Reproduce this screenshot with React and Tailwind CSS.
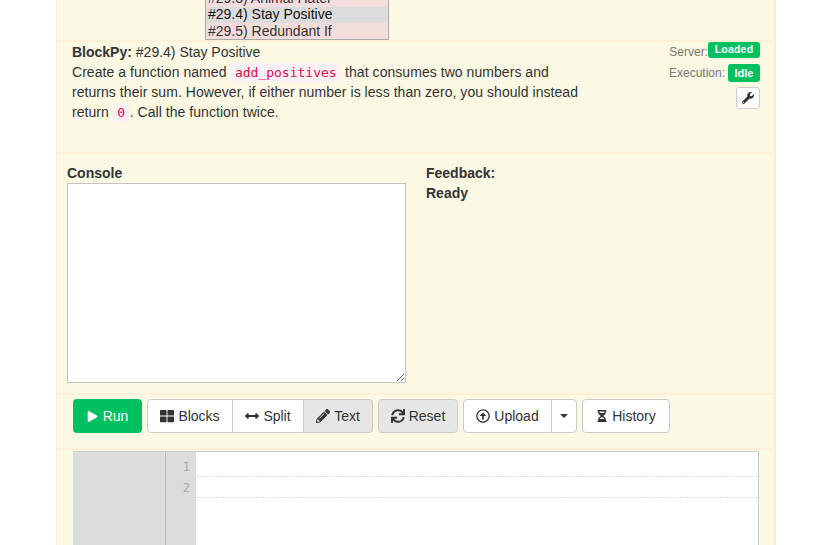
import React from 'react';
import { FaPlay, FaThLarge, FaArrowsAltH, FaPencilAlt, FaSync, FaRegArrowAltCircleUp, FaHourglassHalf, FaWrench } from 'react-icons/fa';

const Code = ({ children }) => (
  <code className="mx-[0.5px] px-[4px] py-[2px] rounded-[4px] bg-[#fbf0f4] text-[#e0064f] text-[13px] leading-[16px] tracking-normal font-['DejaVu_Sans_Mono',monospace]">{children}</code>
);

const Btn = ({ className = '', children }) => (
  <button className={`h-[34px] flex items-center gap-[4px] border border-[#ccc] text-[#333] text-[14px] ${className}`}>{children}</button>
);

const App = () => {
  return (
    <div className="h-[545px] w-[821px] overflow-hidden bg-white font-['Liberation_Sans',sans-serif] text-[14px] leading-[20px] text-[#333]">
      <div className="ml-[56px] w-[720px] h-[545px] bg-[#fbf8e3] border-l border-r-2 border-[#fdeccd]">
        {/* problem picker, scrolled off the top */}
        <div className="h-[42px] border-b-2 border-[#fdf0d6] flex items-end pl-[148px]">
          <div className="w-[184px] border border-[#aaa] border-t-0 text-[14px] leading-[16px]">
            <div className="h-[17px] px-[2px] bg-[#f3dcdc] text-[#333] whitespace-nowrap">#29.3) Animal Hater</div>
            <div className="h-[16px] px-[2px] bg-[#dcdcdc] text-[#111] leading-[15px]">#29.4) Stay Positive</div>
            <div className="h-[16px] px-[2px] bg-[#f3dcdc] text-[#333]">#29.5) Redundant If</div>
          </div>
        </div>

        {/* description */}
        <div className="h-[112px] border-b-2 border-[#fdf0d6] flex justify-between pl-[15px] pr-[14px]">
          <div className="w-[510px]">
            <div><b>BlockPy:</b> #29.4) Stay Positive</div>
            <div className="tracking-[0.05px]">Create a function named <Code>add_positives</Code> that consumes two numbers and returns their sum. However, if either number is less than zero, you should instead return <Code>0</Code>. Call the function twice.</div>
          </div>
          <div className="flex flex-col items-end text-[12px] text-[#777]">
            <div className="flex items-start h-[21px]">
              <span className="pt-[1px] leading-[18px]">Server:</span>
              <span className="h-[16px] w-[52px] text-center rounded-[3px] bg-[#00c060] text-white text-[10.5px] leading-[15px] font-bold tracking-[0.2px]">Loaded</span>
            </div>
            <div className="flex items-start h-[25px]">
              <span className="pt-[1px] leading-[18px]">Execution:</span>
              <span className="ml-[3px] mt-[1px] h-[18px] w-[32px] text-center rounded-[3px] bg-[#00c060] text-white text-[11px] leading-[18px] font-bold">Idle</span>
            </div>
            <button className="mt-[-1px] w-[24px] h-[22px] flex items-center justify-center bg-white border border-[#ccc] rounded-[3px] text-[#333]">
              <FaWrench size={12} />
            </button>
          </div>
        </div>

        {/* console and feedback */}
        <div className="h-[241px] border-b-2 border-[#fdf0d6] flex pl-[10px]">
          <div className="w-[359px]">
            <div className="font-bold h-[20px] mt-[9px]">Console</div>
            <textarea readOnly className="block w-[339px] h-[200px] bg-white border border-[#c4c4c4] outline-none resize-y" />
          </div>
          <div className="pt-[9px] font-bold">
            <div>Feedback:</div>
            <div>Ready</div>
          </div>
        </div>

        {/* toolbar */}
        <div className="h-[55px] border-b-2 border-[#fdf0d6] flex items-start pt-[4px] pl-[16px]">
          <button className="h-[34px] w-[69px] flex items-center justify-center gap-[5px] rounded-[4px] bg-[#00c060] text-white text-[14px]">
            <FaPlay size={11} /> Run
          </button>
          <div className="flex ml-[5px]">
            <Btn className="w-[86px] justify-center rounded-l-[4px] bg-white"><FaThLarge size={14} /> Blocks</Btn>
            <Btn className="w-[72px] justify-center -ml-[1px] bg-white"><FaArrowsAltH size={14} /> Split</Btn>
            <Btn className="w-[70px] justify-center -ml-[1px] rounded-r-[4px] bg-[#e6e6e6] border-[#adadad]"><FaPencilAlt size={14} /> Text</Btn>
          </div>
          <Btn className="w-[80px] ml-[5px] justify-center rounded-[4px] bg-[#e6e6e6] border-[#adadad]"><FaSync size={14} /> Reset</Btn>
          <div className="flex ml-[5px]">
            <Btn className="w-[89px] justify-center rounded-l-[4px] bg-white"><FaRegArrowAltCircleUp size={14} /> Upload</Btn>
            <Btn className="w-[26px] justify-center -ml-[1px] rounded-r-[4px] bg-white">
              <span className="border-x-[4px] border-t-[4px] border-x-transparent border-t-[#333]" />
            </Btn>
          </div>
          <Btn className="w-[88px] ml-[5px] justify-center rounded-[4px] bg-white"><FaHourglassHalf size={12} /> History</Btn>
        </div>

        {/* editor */}
        <div className="ml-[16px] mt-[1px] w-[686px] h-[100px] flex border-t border-r border-[#ccc] bg-white">
          <div className="w-[93px] bg-[#dcdcdc] border-r border-[#bbb]" />
          <div className="w-[30px] bg-[#dcdcdc] pr-[6px] text-right text-[12px] text-[#aaa] font-['DejaVu_Sans_Mono',monospace] leading-[21px] pt-[5px]">
            <div>1</div>
            <div>2</div>
          </div>
          <div className="flex-1 pt-[4px]">
            <div className="h-[21px] border-b border-dashed border-[#ddd]" />
            <div className="h-[21px] border-b border-dashed border-[#ddd]" />
          </div>
        </div>
      </div>
    </div>
  );
};

export default App;
